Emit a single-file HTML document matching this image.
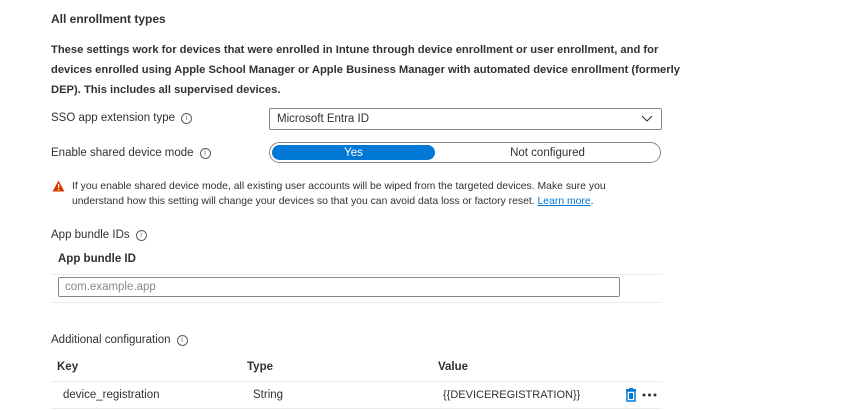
<!DOCTYPE html>
<html><head><style>
body{margin:0;width:865px;height:410px;background:#fff;font-family:"Liberation Sans",sans-serif;color:#323130;position:relative;overflow:hidden}
.a{position:absolute;white-space:nowrap}
.i{display:inline-block;width:9px;height:9px;border:1px solid #605e5c;border-radius:50%;font-size:7px;text-align:center;line-height:9px;color:#605e5c;vertical-align:1px;margin-left:6px}
.line{position:absolute;height:1px;background:#edebe9}
</style></head><body>
<div class="a" style="left:51px;top:12px;font-size:12px;font-weight:bold">All enrollment types</div>
<div class="a" style="left:51px;top:40px;font-size:11.2px;font-weight:bold;line-height:20px;white-space:normal;width:630px">These settings work for devices that were enrolled in Intune through device enrollment or user enrollment, and for devices enrolled using Apple School Manager or Apple Business Manager with automated device enrollment (formerly DEP). This includes all supervised devices.</div>
<div class="a" style="left:51px;top:112px;font-size:11.5px">SSO app extension type<span class="i">i</span></div>
<div class="a" style="left:269px;top:108px;width:393px;border:1px solid #8a8886;border-radius:2px;font-size:11.5px;line-height:20px;box-sizing:border-box;height:22px;padding-left:7px">Microsoft Entra ID
<svg style="position:absolute;right:8px;top:6px" width="12" height="8"><path d="M1 1L6 6L11 1" stroke="#323130" fill="none"/></svg></div>
<div class="a" style="left:51px;top:147px;font-size:11.5px">Enable shared device mode<span class="i">i</span></div>
<div class="a" style="left:269px;top:142px;width:392px;height:21px;border:1px solid #8a8886;border-radius:11px;box-sizing:border-box;font-size:11.5px">
<div style="position:absolute;left:2px;top:2px;width:163px;height:15px;background:#0078d4;border-radius:8px;color:#fff;text-align:center;line-height:17px">Yes</div>
<div style="position:absolute;left:165px;top:2px;width:225px;line-height:17px;text-align:center">Not configured</div></div>
<svg class="a" style="left:52px;top:180px" width="13" height="12"><path d="M6.5 0.5L12.5 11.5H0.5Z" fill="#d83b01"/><rect x="6" y="4" width="1.2" height="4" fill="#fff"/><rect x="6" y="9" width="1.2" height="1.2" fill="#fff"/></svg>
<div class="a" style="left:72px;top:179px;font-size:10.4px;line-height:15px">If you enable shared device mode, all existing user accounts will be wiped from the targeted devices. Make sure you<br>understand how this setting will change your devices so that you can avoid data loss or factory reset. <span style="color:#0078d4;text-decoration:underline">Learn more</span>.</div>
<div class="a" style="left:51px;top:229px;font-size:11.5px">App bundle IDs<span class="i">i</span></div>
<div class="a" style="left:58px;top:253px;font-size:11.5px;font-weight:bold">App bundle ID</div>
<div class="line" style="left:51px;top:274px;width:611px"></div>
<div class="a" style="left:58px;top:277px;width:562px;height:20px;border:1px solid #8a8886;border-radius:2px;box-sizing:border-box;font-size:11.5px;color:#8a8886;line-height:18px;padding-left:6px">com.example.app</div>
<div class="line" style="left:51px;top:302px;width:611px"></div>
<div class="a" style="left:51px;top:334px;font-size:11.5px">Additional configuration<span class="i">i</span></div>
<div class="a" style="left:57px;top:361px;font-size:11.5px;font-weight:bold">Key</div>
<div class="a" style="left:247px;top:361px;font-size:11.5px;font-weight:bold">Type</div>
<div class="a" style="left:438px;top:361px;font-size:11.5px;font-weight:bold">Value</div>
<div class="line" style="left:51px;top:381px;width:611px"></div>
<div class="a" style="left:63px;top:389px;font-size:11.5px">device_registration</div>
<div class="a" style="left:253px;top:389px;font-size:11.5px">String</div>
<div class="a" style="left:443px;top:389px;font-size:11px">{{DEVICEREGISTRATION}}</div>
<svg class="a" style="left:626px;top:388px" width="10" height="14"><rect x="0" y="1" width="10" height="2" fill="#0078d4"/><rect x="3" y="0" width="4" height="2" fill="#0078d4"/><rect x="1" y="3" width="8" height="10" fill="none" stroke="#0078d4" stroke-width="1.5"/><rect x="3" y="5" width="4" height="6" fill="#0078d4"/></svg>
<svg class="a" style="left:642px;top:393px" width="16" height="4"><circle cx="2" cy="2" r="1.5" fill="#323130"/><circle cx="7.5" cy="2" r="1.5" fill="#323130"/><circle cx="13" cy="2" r="1.5" fill="#323130"/></svg>
<div class="line" style="left:51px;top:408px;width:611px"></div>
</body></html>
